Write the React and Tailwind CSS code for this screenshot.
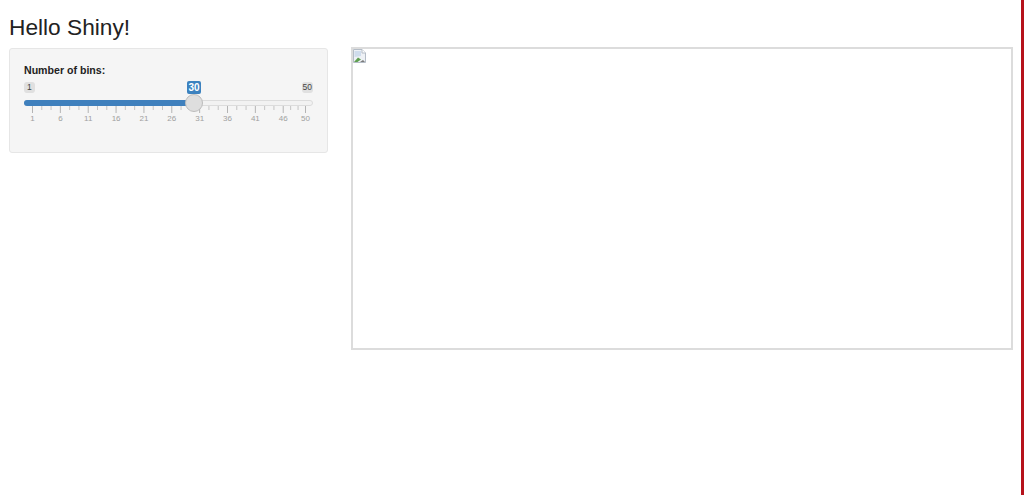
const LABELS = [1, 6, 11, 16, 21, 26, 31, 36, 41, 46, 50]

function tickX(value) {
  return 0.5 + ((value - 1) * 273) / 49
}

function Ticks() {
  const minor = []
  for (let i = 0; i < 10; i++) {
    const from = LABELS[i]
    const to = LABELS[i + 1]
    for (let j = 1; j < 3; j++) minor.push(from + ((to - from) * j) / 3)
  }
  return (
    <svg width="275" height="8" className="block">
      {LABELS.map(v => (
        <line key={v} x1={tickX(v)} x2={tickX(v)} y1="0" y2="7" stroke="#b4b4b4" />
      ))}
      {minor.map(v => (
        <line key={v} x1={tickX(v)} x2={tickX(v)} y1="0" y2="4" stroke="#c4c4c4" />
      ))}
    </svg>
  )
}

function Slider() {
  return (
    <div className="mt-1 flex w-[289px] flex-col">
      <div className="relative flex h-[13px] items-center justify-between">
        <span className="rounded-[3px] bg-[#e0e0e0] px-[3px] text-[8.5px] leading-[11px] text-[#444]">1</span>
        <span className="rounded-[3px] bg-[#e0e0e0] px-[1px] text-[8.5px] leading-[11px] text-[#444]">50</span>
        <span className="absolute left-[163px] top-0 w-[14px] rounded-[2px] bg-[#3c82bf] text-center text-[10px] font-bold leading-[13px] text-white">30</span>
      </div>

      <div className="relative mt-[6px] h-[6px] rounded-full border border-[#dcdcdc] bg-[#f2f2f2]">
        <div className="-m-px h-[6px] w-[170px] rounded-l-full bg-[#3f80bd]" />
        <div className="absolute -top-[7px] left-[160px] h-[18px] w-[18px] rounded-full border border-[#bcbcbc] bg-[#dedede]" />
      </div>

      <div className="pl-[8px]">
        <Ticks />
        <div className="flex">
          {LABELS.map((v, i) => (
            <div key={v} className={i < 9 ? 'w-[27.86px]' : i === 9 ? 'w-[22.3px]' : 'w-0'}>
              <span className="flex w-px justify-center text-[8px] leading-[10px] text-[#a0a0a0]">{v}</span>
            </div>
          ))}
        </div>
      </div>
    </div>
  )
}

function BrokenImage() {
  return (
    <svg width="16" height="16" viewBox="0 0 16 16" className="-ml-px -mt-px block">
      <path d="M1.5 1.5H10L13.5 5V14.5H1.5Z" fill="#eef1f5" stroke="#b4bcc6" />
      <path d="M10 1.5V5H13.5" fill="#fff" stroke="#b4bcc6" />
      <path d="M2.5 3H9V8L2.5 9Z" fill="#cfdcec" />
      <path d="M2 14L6 9.5L9 11.5L5.5 14Z" fill="#5f9f50" />
      <path d="M8 14L11 12L13 14Z" fill="#7a7a7a" />
    </svg>
  )
}

export default function App() {
  return (
    <div className="flex h-screen overflow-hidden bg-white font-['Liberation_Sans',Arial,sans-serif]">
      <div className="flex-1 pl-[9px] pr-[8px]">
        <h1 className="h-[47px] pt-[14px] text-[22.7px] font-normal leading-[27px] text-[#222]">Hello Shiny!</h1>
        <div className="flex items-start">
          <div className="mt-px h-[105px] w-[319px] rounded-[3px] border border-[#e6e6e6] bg-[#f5f5f5] px-[14px] pt-[15px]">
            <label className="block text-[10.6px] font-bold leading-[13px] text-[#222]">Number of bins:</label>
            <Slider />
          </div>
          <div className="ml-[23px] h-[303px] flex-1 border-2 border-[#dcdcdc] bg-white">
            <BrokenImage />
          </div>
        </div>
      </div>
      <div className="w-[3px] bg-[#b5121b]" />
    </div>
  )
}
